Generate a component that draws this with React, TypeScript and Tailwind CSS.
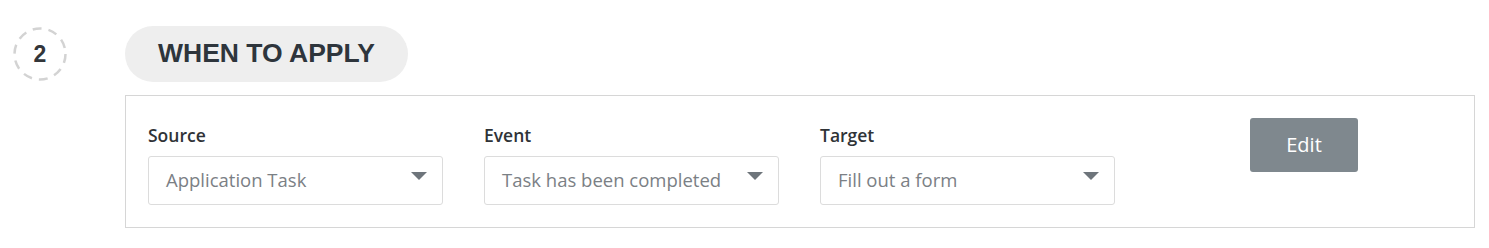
import { ReactNode } from 'react'

interface SelectBoxProps {
  label: string
  value: string
}

function Caret() {
  return (
    <svg width="16" height="8" viewBox="0 0 16 8" className="shrink-0">
      <path d="M0 0 L16 0 L8 8 Z" fill="#6e757b" />
    </svg>
  )
}

function SelectBox({ label, value }: SelectBoxProps) {
  return (
    <div className="flex w-[295px] flex-col">
      <label className="mb-[9px] text-[17.5px] leading-[23px] font-semibold text-[#2f3337]">{label}</label>
      <div className="flex h-[49px] items-start justify-between rounded-[3px] border border-[#dcdcdc] bg-white pr-[15px] pl-[17px]">
        <span className="mt-[11px] text-[18.5px] leading-[24px] text-[#7b8085]">{value}</span>
        <div className="mt-[15px]">
          <Caret />
        </div>
      </div>
    </div>
  )
}

function StepBadge({ step }: { step: number }) {
  return (
    <div className="relative ml-[13px] mt-[27px] flex h-[54px] w-[54px] items-center justify-center">
      <svg width="54" height="54" viewBox="0 0 54 54" className="absolute inset-0">
        <circle cx="27" cy="27" r="25.5" fill="none" stroke="#d3d3d3" strokeWidth="2.5" strokeDasharray="9 7" />
      </svg>
      <span className="relative font-['Liberation_Sans',Arial,sans-serif] text-[23px] font-bold text-[#33363a]">{step}</span>
    </div>
  )
}

function Section({ step, title, children }: { step: number; title: string; children: ReactNode }) {
  return (
    <div className="flex items-start">
      <StepBadge step={step} />
      <div className="ml-[58px] mt-[26px] flex flex-col">
        <div className="flex h-[56px] w-[283px] items-center rounded-full bg-[#eeeeee] pl-[33px]">
          <h2 className="font-['Liberation_Sans',Arial,sans-serif] text-[26.5px] font-bold text-[#2e353c]">{title}</h2>
        </div>
        <div className="mt-[13px]">{children}</div>
      </div>
    </div>
  )
}

export default function App() {
  return (
    <div className="h-[248px] w-[1489px] bg-white font-['Open_Sans',sans-serif]">
      <Section step={2} title="WHEN TO APPLY">
        <div className="flex h-[133px] w-[1350px] items-start border border-[#d6d6d6] pt-[22px] pl-[22px]">
          <div className="mt-[6px] flex gap-[41px]">
            <SelectBox label="Source" value="Application Task" />
            <SelectBox label="Event" value="Task has been completed" />
            <SelectBox label="Target" value="Fill out a form" />
          </div>
          <button className="ml-[135px] h-[54px] w-[108px] rounded-[3px] bg-[#7f888e] text-[20px] font-medium text-white">
            Edit
          </button>
        </div>
      </Section>
    </div>
  )
}
